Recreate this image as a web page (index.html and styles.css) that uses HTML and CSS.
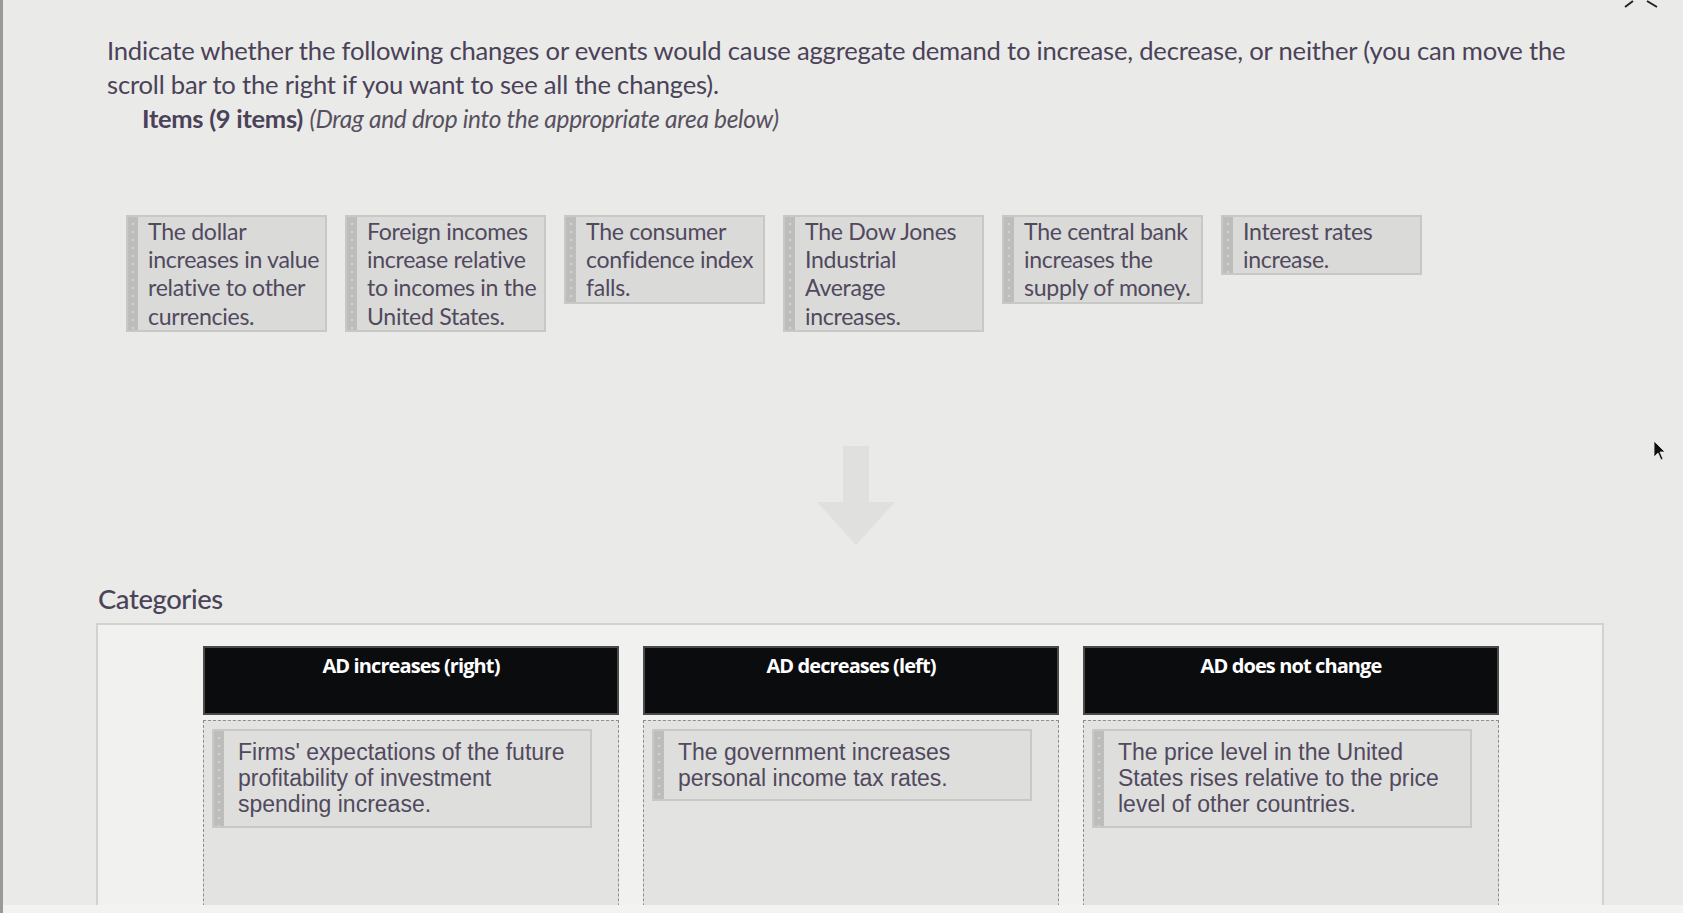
FILE: index.html
```html
<!DOCTYPE html>
<html lang="en">
<head>
<meta charset="utf-8">
<title>Aggregate demand</title>
<link rel="stylesheet" href="styles.css">
</head>
<body>
<div class="page">
  <p class="prompt">Indicate whether the following changes or events would cause aggregate demand to increase, decrease, or neither (you can move the<br>scroll bar to the right if you want to see all the changes).</p>
  <p class="items-title"><span class="items-count">Items (9 items)</span> <em class="items-hint">(Drag and drop into the appropriate area below)</em></p>

  <div class="items-row">
    <div class="card"><span class="grip"></span><span class="card-text">The dollar increases in value relative to other currencies.</span></div>
    <div class="card"><span class="grip"></span><span class="card-text">Foreign incomes increase relative to incomes in the United States.</span></div>
    <div class="card"><span class="grip"></span><span class="card-text">The consumer confidence index falls.</span></div>
    <div class="card"><span class="grip"></span><span class="card-text">The Dow Jones Industrial Average increases.</span></div>
    <div class="card"><span class="grip"></span><span class="card-text">The central bank increases the supply of money.</span></div>
    <div class="card"><span class="grip"></span><span class="card-text">Interest rates increase.</span></div>
  </div>

  <div class="arrow-wrap">
    <svg class="arrow" width="80" height="100" viewBox="0 0 80 100"><path d="M27 0 H53 V56 H79 L40 99 L1 56 H27 Z" fill="#e0e0de"/></svg>
  </div>

  <h2 class="cat-title">Categories</h2>
  <div class="cat-box">
    <div class="column">
      <div class="col-head">AD increases (right)</div>
      <div class="zone">
        <div class="card placed"><span class="grip"></span><span class="card-text">Firms' expectations of the future profitability of investment spending increase.</span></div>
      </div>
    </div>
    <div class="column">
      <div class="col-head">AD decreases (left)</div>
      <div class="zone">
        <div class="card placed"><span class="grip"></span><span class="card-text">The government increases personal income tax rates.</span></div>
      </div>
    </div>
    <div class="column">
      <div class="col-head">AD does not change</div>
      <div class="zone">
        <div class="card placed"><span class="grip"></span><span class="card-text">The price level in the United States rises relative to the price level of other countries.</span></div>
      </div>
    </div>
  </div>
</div>
<svg class="cursor" width="14" height="22" viewBox="0 0 14 22"><path d="M1 1 L1 17 L5 13 L8 20 L10 19 L7 12 L12 12 Z" fill="#111" stroke="#eee" stroke-width="0.8"/></svg>
<svg class="corner-mark" width="40" height="8" viewBox="0 0 40 8"><path d="M2 7 L10 1 M24 1 L34 7" stroke="#222" stroke-width="2" fill="none"/></svg>
</body>
</html>
```

FILE: styles.css
```css
html, body {
  margin: 0;
  padding: 0;
}
body {
  width: 1683px;
  height: 913px;
  overflow: hidden;
  background: #f3f3f2;
  font-family: Lato, "Open Sans", sans-serif;
  color: #4a4258;
  position: relative;
  border-left: 3px solid #9a9a98;
  box-sizing: border-box;
}
.page {
  height: 905px;
  overflow: hidden;
  box-sizing: border-box;
  background: #eaeae8;
  padding: 33px 0 0 104px;
}
.prompt {
  margin: 0;
  font-size: 25.6px;
  line-height: 34px;
  letter-spacing: -0.2px;
}
.items-title {
  margin: 0 0 0 35px;
  font-size: 25.5px;
  line-height: 34px;
}
.items-count {
  font-weight: 700;
  letter-spacing: -0.3px;
}
.items-hint {
  font-size: 24.5px;
  color: #57515f;
  letter-spacing: -0.3px;
}
.items-row {
  display: flex;
  align-items: flex-start;
  gap: 18px;
  margin: 79px 0 0 19px;
}
.card {
  display: flex;
  align-items: stretch;
  width: 201px;
  box-sizing: border-box;
  background: #dadad9;
  border: 2px solid #c8c8c7;
}
.grip {
  flex: 0 0 10px;
  background-color: #bdbdbc;
  background-image: radial-gradient(circle, #d2d2d1 1.4px, transparent 1.6px);
  background-size: 10px 8px;
  background-position: 0 3px;
}
.card-text {
  padding: 0 4px 0 10px;
  font-size: 23.1px;
  line-height: 28.2px;
  letter-spacing: -0.3px;
  color: #51495d;
}
.arrow-wrap {
  display: flex;
  justify-content: center;
  width: 1497px;
  margin-top: 114px;
  height: 135px;
}
.cat-title {
  margin: 0 0 0 -9px;
  font-size: 27.4px;
  font-weight: 500;
  line-height: 36px;
  letter-spacing: -0.4px;
  color: #4b4458;
}
.cat-box {
  display: flex;
  gap: 24px;
  margin: 6px 0 0 -11px;
  width: 1508px;
  height: 320px;
  box-sizing: border-box;
  padding: 21px 0 0 105px;
  background: #f1f1f0;
  border: 2px solid #d2d2d1;
}
.column {
  width: 416px;
  display: flex;
  flex-direction: column;
  gap: 5px;
}
.col-head {
  height: 69px;
  box-sizing: border-box;
  background: #0b0c0e;
  border: 2px solid #4a4a4a;
  color: #fff;
  text-align: center;
  font-family: "Open Sans", Lato, sans-serif;
  font-weight: 700;
  font-size: 20px;
  letter-spacing: -0.9px;
  padding-top: 4px;
}
.zone {
  flex: 1;
  border: 1.5px dashed #8d8d8d;
  background: #e3e3e2;
  padding: 8px 0 0 8px;
}
.card.placed {
  width: 380px;
  background: #dededd;
}
.card.placed .card-text {
  font-family: "Liberation Sans", Arial, sans-serif;
  font-size: 23px;
  line-height: 26.3px;
  letter-spacing: 0;
  padding: 8px 20px 8px 14px;
}
.cursor {
  position: absolute;
  left: 1650px;
  top: 440px;
}
.corner-mark {
  position: absolute;
  left: 1620px;
  top: 0;
}
```
